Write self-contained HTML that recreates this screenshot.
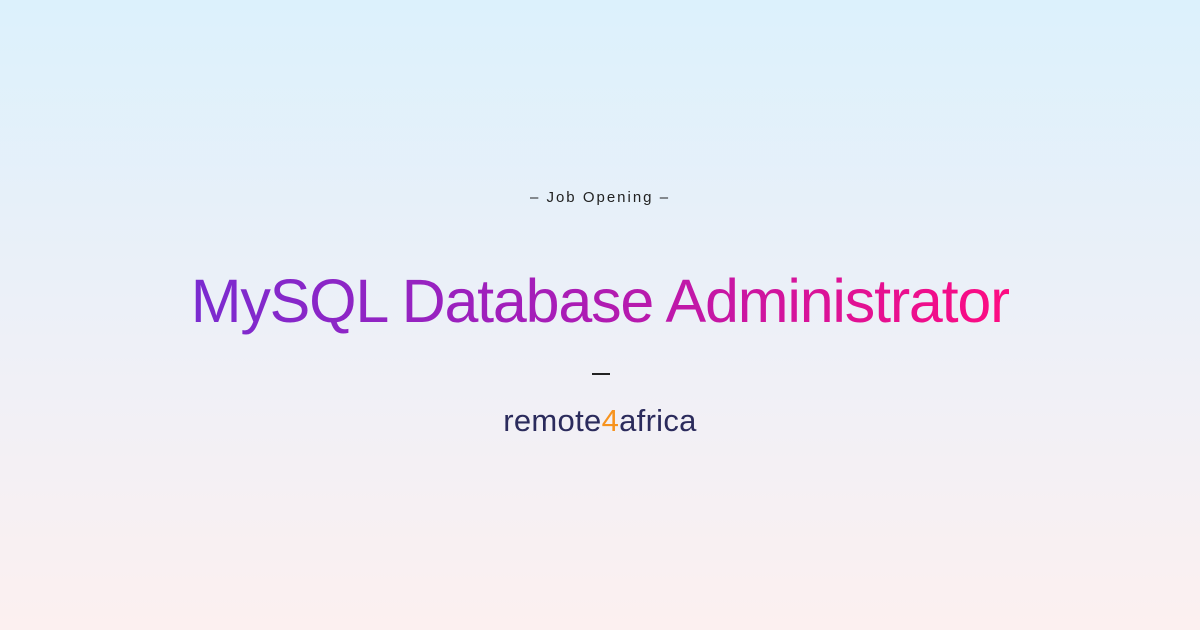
<!DOCTYPE html>
<html><head><meta charset="utf-8"><style>
html,body{margin:0;padding:0}
body{width:1200px;height:630px;overflow:hidden;background:linear-gradient(180deg,#dcf1fc 0%,#eef0f7 55%,#fcf0f0 100%);font-family:"Liberation Sans",sans-serif;position:relative}
.sub{position:absolute;top:189px;left:0;width:1200px;text-align:center;font-size:15px;letter-spacing:2px;color:#222}
.title{position:absolute;top:263px;left:0;width:1200px;text-align:center;font-size:61px;letter-spacing:-1.2px;line-height:76px}
.title span{background:linear-gradient(90deg,#7a2bd0,#a81db7 45%,#fe0b82);-webkit-background-clip:text;background-clip:text;color:transparent}
.dash{position:absolute;left:592px;top:373px;width:18px;height:2px;background:#222}
.logo{position:absolute;top:403px;left:0;width:1200px;text-align:center;font-size:31px;color:#2b2b5c;letter-spacing:0.3px}
.logo b{font-weight:normal;color:#f7931e}
</style></head><body>
<div class="sub">– Job Opening –</div>
<div class="title"><span>MySQL Database Administrator</span></div>
<div class="dash"></div>
<div class="logo">remote<b>4</b>africa</div>
</body></html>
